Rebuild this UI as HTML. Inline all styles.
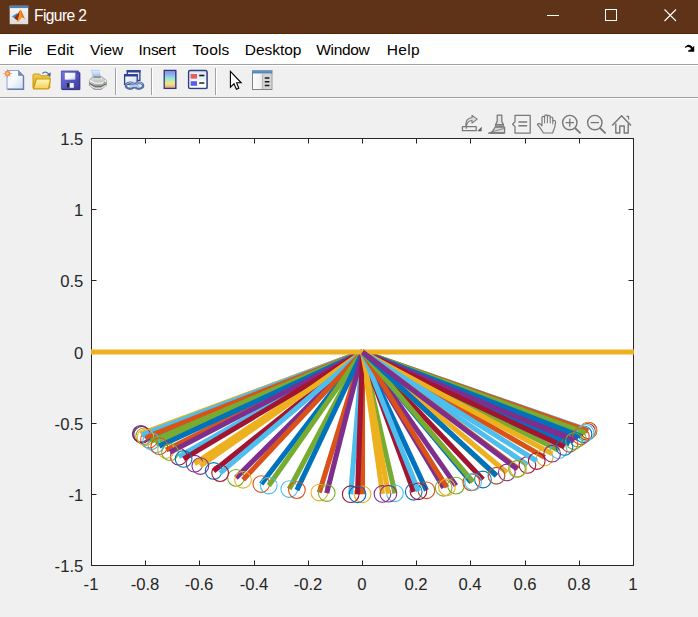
<!DOCTYPE html>
<html><head><meta charset="utf-8"><title>Figure 2</title>
<style>
html,body{margin:0;padding:0;}
body{width:698px;height:617px;overflow:hidden;background:#f0f0f0;font-family:"Liberation Sans",sans-serif;position:relative;}
#title{position:absolute;left:0;top:0;width:698px;height:33px;background:#5f3318;border-bottom:1px solid #552400;}
#title .t{position:absolute;left:34px;top:7px;color:#fff;font-size:15.6px;line-height:17px;letter-spacing:-0.6px;white-space:nowrap;}
#menu{position:absolute;left:0;top:34px;width:698px;height:30px;background:#fff;}
#menu span{position:absolute;top:6.6px;font-size:15.5px;line-height:17px;color:#000;white-space:nowrap;letter-spacing:-0.2px;}
#l1{position:absolute;left:0;top:64px;width:698px;height:1px;background:#a0a0a0;}
#l1b{position:absolute;left:0;top:65px;width:698px;height:1px;background:#fff;}
#l2{position:absolute;left:0;top:97px;width:698px;height:1px;background:#a0a0a0;}
#l2b{position:absolute;left:0;top:98px;width:698px;height:1px;background:#fff;}
svg{position:absolute;left:0;top:0;}
svg text{font-family:"Liberation Sans",sans-serif;font-size:16.67px;fill:#262626;}
</style></head><body>
<div id="title"><div class="t">Figure 2</div></div>
<div id="menu">
<span style="left:8px;letter-spacing:-0.2px">File</span><span style="left:46.6px;letter-spacing:0.2px">Edit</span><span style="left:90px;letter-spacing:0px">View</span><span style="left:138.6px;letter-spacing:-0.3px">Insert</span><span style="left:192.4px;letter-spacing:0.2px">Tools</span><span style="left:244.8px;letter-spacing:-0.05px">Desktop</span><span style="left:316.2px;letter-spacing:-0.3px">Window</span><span style="left:386.8px;letter-spacing:0.3px">Help</span>
</div>
<div id="l1"></div><div id="l1b"></div><div id="l2"></div><div id="l2b"></div>
<svg width="698" height="617" viewBox="0 0 698 617">
<rect x="91.5" y="138.5" width="542.0" height="427.0" fill="#fff" stroke="none"/>
<rect x="91.5" y="138.5" width="542.0" height="427.0" fill="none" stroke="#262626" stroke-width="1"/>
<path d="M91.5 565.5v-5M91.5 138.5v5" stroke="#262626" stroke-width="1" fill="none"/>
<path d="M145.5 565.5v-5M145.5 138.5v5" stroke="#262626" stroke-width="1" fill="none"/>
<path d="M199.5 565.5v-5M199.5 138.5v5" stroke="#262626" stroke-width="1" fill="none"/>
<path d="M254.5 565.5v-5M254.5 138.5v5" stroke="#262626" stroke-width="1" fill="none"/>
<path d="M308.5 565.5v-5M308.5 138.5v5" stroke="#262626" stroke-width="1" fill="none"/>
<path d="M362.5 565.5v-5M362.5 138.5v5" stroke="#262626" stroke-width="1" fill="none"/>
<path d="M416.5 565.5v-5M416.5 138.5v5" stroke="#262626" stroke-width="1" fill="none"/>
<path d="M470.5 565.5v-5M470.5 138.5v5" stroke="#262626" stroke-width="1" fill="none"/>
<path d="M525.5 565.5v-5M525.5 138.5v5" stroke="#262626" stroke-width="1" fill="none"/>
<path d="M579.5 565.5v-5M579.5 138.5v5" stroke="#262626" stroke-width="1" fill="none"/>
<path d="M633.5 565.5v-5M633.5 138.5v5" stroke="#262626" stroke-width="1" fill="none"/>
<path d="M91.5 138.5h5M633.5 138.5h-5" stroke="#262626" stroke-width="1" fill="none"/>
<path d="M91.5 209.5h5M633.5 209.5h-5" stroke="#262626" stroke-width="1" fill="none"/>
<path d="M91.5 280.5h5M633.5 280.5h-5" stroke="#262626" stroke-width="1" fill="none"/>
<path d="M91.5 352.5h5M633.5 352.5h-5" stroke="#262626" stroke-width="1" fill="none"/>
<path d="M91.5 423.5h5M633.5 423.5h-5" stroke="#262626" stroke-width="1" fill="none"/>
<path d="M91.5 494.5h5M633.5 494.5h-5" stroke="#262626" stroke-width="1" fill="none"/>
<path d="M91.5 565.5h5M633.5 565.5h-5" stroke="#262626" stroke-width="1" fill="none"/>
<g stroke-linecap="butt">
<line x1="362.50" y1="352.00" x2="362.50" y2="494.33" stroke="#D95319" stroke-width="5.1"/>
<circle cx="362.50" cy="494.33" r="8.33" fill="none" stroke="#EDB120" stroke-width="1.1"/>
<line x1="362.50" y1="352.00" x2="394.98" y2="493.31" stroke="#77AC30" stroke-width="5.1"/>
<circle cx="394.98" cy="493.31" r="8.33" fill="none" stroke="#4DBEEE" stroke-width="1.1"/>
<line x1="362.50" y1="352.00" x2="426.42" y2="490.32" stroke="#0072BD" stroke-width="5.1"/>
<circle cx="426.42" cy="490.32" r="8.33" fill="none" stroke="#D95319" stroke-width="1.1"/>
<line x1="362.50" y1="352.00" x2="455.97" y2="485.60" stroke="#7E2F8E" stroke-width="5.1"/>
<circle cx="455.97" cy="485.60" r="8.33" fill="none" stroke="#77AC30" stroke-width="1.1"/>
<line x1="362.50" y1="352.00" x2="482.94" y2="479.50" stroke="#A2142F" stroke-width="5.1"/>
<circle cx="482.94" cy="479.50" r="8.33" fill="none" stroke="#0072BD" stroke-width="1.1"/>
<line x1="362.50" y1="352.00" x2="506.84" y2="472.46" stroke="#EDB120" stroke-width="5.1"/>
<circle cx="506.84" cy="472.46" r="8.33" fill="none" stroke="#7E2F8E" stroke-width="1.1"/>
<line x1="362.50" y1="352.00" x2="527.43" y2="464.94" stroke="#4DBEEE" stroke-width="5.1"/>
<circle cx="527.43" cy="464.94" r="8.33" fill="none" stroke="#A2142F" stroke-width="1.1"/>
<line x1="362.50" y1="352.00" x2="544.65" y2="457.39" stroke="#D95319" stroke-width="5.1"/>
<circle cx="544.65" cy="457.39" r="8.33" fill="none" stroke="#EDB120" stroke-width="1.1"/>
<line x1="362.50" y1="352.00" x2="558.63" y2="450.22" stroke="#77AC30" stroke-width="5.1"/>
<circle cx="558.63" cy="450.22" r="8.33" fill="none" stroke="#4DBEEE" stroke-width="1.1"/>
<line x1="362.50" y1="352.00" x2="569.58" y2="443.81" stroke="#0072BD" stroke-width="5.1"/>
<circle cx="569.58" cy="443.81" r="8.33" fill="none" stroke="#D95319" stroke-width="1.1"/>
<line x1="362.50" y1="352.00" x2="577.79" y2="438.44" stroke="#7E2F8E" stroke-width="5.1"/>
<circle cx="577.79" cy="438.44" r="8.33" fill="none" stroke="#77AC30" stroke-width="1.1"/>
<line x1="362.50" y1="352.00" x2="583.54" y2="434.34" stroke="#A2142F" stroke-width="5.1"/>
<circle cx="583.54" cy="434.34" r="8.33" fill="none" stroke="#0072BD" stroke-width="1.1"/>
<line x1="362.50" y1="352.00" x2="587.07" y2="431.67" stroke="#EDB120" stroke-width="5.1"/>
<circle cx="587.07" cy="431.67" r="8.33" fill="none" stroke="#7E2F8E" stroke-width="1.1"/>
<line x1="362.50" y1="352.00" x2="588.54" y2="430.51" stroke="#4DBEEE" stroke-width="5.1"/>
<circle cx="588.54" cy="430.51" r="8.33" fill="none" stroke="#A2142F" stroke-width="1.1"/>
<line x1="362.50" y1="352.00" x2="588.03" y2="430.92" stroke="#D95319" stroke-width="5.1"/>
<circle cx="588.03" cy="430.92" r="8.33" fill="none" stroke="#EDB120" stroke-width="1.1"/>
<line x1="362.50" y1="352.00" x2="585.52" y2="432.86" stroke="#77AC30" stroke-width="5.1"/>
<circle cx="585.52" cy="432.86" r="8.33" fill="none" stroke="#4DBEEE" stroke-width="1.1"/>
<line x1="362.50" y1="352.00" x2="580.90" y2="436.27" stroke="#0072BD" stroke-width="5.1"/>
<circle cx="580.90" cy="436.27" r="8.33" fill="none" stroke="#D95319" stroke-width="1.1"/>
<line x1="362.50" y1="352.00" x2="573.96" y2="441.01" stroke="#7E2F8E" stroke-width="5.1"/>
<circle cx="573.96" cy="441.01" r="8.33" fill="none" stroke="#77AC30" stroke-width="1.1"/>
<line x1="362.50" y1="352.00" x2="564.47" y2="446.90" stroke="#A2142F" stroke-width="5.1"/>
<circle cx="564.47" cy="446.90" r="8.33" fill="none" stroke="#0072BD" stroke-width="1.1"/>
<line x1="362.50" y1="352.00" x2="552.14" y2="453.68" stroke="#EDB120" stroke-width="5.1"/>
<circle cx="552.14" cy="453.68" r="8.33" fill="none" stroke="#7E2F8E" stroke-width="1.1"/>
<line x1="362.50" y1="352.00" x2="536.74" y2="461.01" stroke="#4DBEEE" stroke-width="5.1"/>
<circle cx="536.74" cy="461.01" r="8.33" fill="none" stroke="#A2142F" stroke-width="1.1"/>
<line x1="362.50" y1="352.00" x2="518.12" y2="468.53" stroke="#D95319" stroke-width="5.1"/>
<circle cx="518.12" cy="468.53" r="8.33" fill="none" stroke="#EDB120" stroke-width="1.1"/>
<line x1="362.50" y1="352.00" x2="496.25" y2="475.79" stroke="#77AC30" stroke-width="5.1"/>
<circle cx="496.25" cy="475.79" r="8.33" fill="none" stroke="#4DBEEE" stroke-width="1.1"/>
<line x1="362.50" y1="352.00" x2="471.28" y2="482.36" stroke="#0072BD" stroke-width="5.1"/>
<circle cx="471.28" cy="482.36" r="8.33" fill="none" stroke="#D95319" stroke-width="1.1"/>
<line x1="362.50" y1="352.00" x2="443.58" y2="487.81" stroke="#7E2F8E" stroke-width="5.1"/>
<circle cx="443.58" cy="487.81" r="8.33" fill="none" stroke="#77AC30" stroke-width="1.1"/>
<line x1="362.50" y1="352.00" x2="413.73" y2="491.77" stroke="#A2142F" stroke-width="5.1"/>
<circle cx="413.73" cy="491.77" r="8.33" fill="none" stroke="#0072BD" stroke-width="1.1"/>
<line x1="362.50" y1="352.00" x2="382.47" y2="493.95" stroke="#EDB120" stroke-width="5.1"/>
<circle cx="382.47" cy="493.95" r="8.33" fill="none" stroke="#7E2F8E" stroke-width="1.1"/>
<line x1="362.50" y1="352.00" x2="350.70" y2="494.20" stroke="#4DBEEE" stroke-width="5.1"/>
<circle cx="350.70" cy="494.20" r="8.33" fill="none" stroke="#A2142F" stroke-width="1.1"/>
<line x1="362.50" y1="352.00" x2="319.33" y2="492.52" stroke="#D95319" stroke-width="5.1"/>
<circle cx="319.33" cy="492.52" r="8.33" fill="none" stroke="#EDB120" stroke-width="1.1"/>
<line x1="362.50" y1="352.00" x2="289.27" y2="489.04" stroke="#77AC30" stroke-width="5.1"/>
<circle cx="289.27" cy="489.04" r="8.33" fill="none" stroke="#4DBEEE" stroke-width="1.1"/>
<line x1="362.50" y1="352.00" x2="261.28" y2="484.03" stroke="#0072BD" stroke-width="5.1"/>
<circle cx="261.28" cy="484.03" r="8.33" fill="none" stroke="#D95319" stroke-width="1.1"/>
<line x1="362.50" y1="352.00" x2="235.95" y2="477.86" stroke="#7E2F8E" stroke-width="5.1"/>
<circle cx="235.95" cy="477.86" r="8.33" fill="none" stroke="#77AC30" stroke-width="1.1"/>
<line x1="362.50" y1="352.00" x2="213.67" y2="470.95" stroke="#A2142F" stroke-width="5.1"/>
<circle cx="213.67" cy="470.95" r="8.33" fill="none" stroke="#0072BD" stroke-width="1.1"/>
<line x1="362.50" y1="352.00" x2="194.62" y2="463.73" stroke="#EDB120" stroke-width="5.1"/>
<circle cx="194.62" cy="463.73" r="8.33" fill="none" stroke="#7E2F8E" stroke-width="1.1"/>
<line x1="362.50" y1="352.00" x2="178.80" y2="456.64" stroke="#4DBEEE" stroke-width="5.1"/>
<circle cx="178.80" cy="456.64" r="8.33" fill="none" stroke="#A2142F" stroke-width="1.1"/>
<line x1="362.50" y1="352.00" x2="166.07" y2="450.06" stroke="#D95319" stroke-width="5.1"/>
<circle cx="166.07" cy="450.06" r="8.33" fill="none" stroke="#EDB120" stroke-width="1.1"/>
<line x1="362.50" y1="352.00" x2="156.22" y2="444.31" stroke="#77AC30" stroke-width="5.1"/>
<circle cx="156.22" cy="444.31" r="8.33" fill="none" stroke="#4DBEEE" stroke-width="1.1"/>
<line x1="362.50" y1="352.00" x2="148.97" y2="439.64" stroke="#0072BD" stroke-width="5.1"/>
<circle cx="148.97" cy="439.64" r="8.33" fill="none" stroke="#D95319" stroke-width="1.1"/>
<line x1="362.50" y1="352.00" x2="144.09" y2="436.26" stroke="#7E2F8E" stroke-width="5.1"/>
<circle cx="144.09" cy="436.26" r="8.33" fill="none" stroke="#77AC30" stroke-width="1.1"/>
<line x1="362.50" y1="352.00" x2="141.39" y2="434.29" stroke="#A2142F" stroke-width="5.1"/>
<circle cx="141.39" cy="434.29" r="8.33" fill="none" stroke="#0072BD" stroke-width="1.1"/>
<line x1="362.50" y1="352.00" x2="140.74" y2="433.81" stroke="#EDB120" stroke-width="5.1"/>
<circle cx="140.74" cy="433.81" r="8.33" fill="none" stroke="#7E2F8E" stroke-width="1.1"/>
<line x1="362.50" y1="352.00" x2="142.10" y2="434.82" stroke="#4DBEEE" stroke-width="5.1"/>
<circle cx="142.10" cy="434.82" r="8.33" fill="none" stroke="#A2142F" stroke-width="1.1"/>
<line x1="362.50" y1="352.00" x2="145.54" y2="437.29" stroke="#D95319" stroke-width="5.1"/>
<circle cx="145.54" cy="437.29" r="8.33" fill="none" stroke="#EDB120" stroke-width="1.1"/>
<line x1="362.50" y1="352.00" x2="151.20" y2="441.12" stroke="#77AC30" stroke-width="5.1"/>
<circle cx="151.20" cy="441.12" r="8.33" fill="none" stroke="#4DBEEE" stroke-width="1.1"/>
<line x1="362.50" y1="352.00" x2="159.28" y2="446.16" stroke="#0072BD" stroke-width="5.1"/>
<circle cx="159.28" cy="446.16" r="8.33" fill="none" stroke="#D95319" stroke-width="1.1"/>
<line x1="362.50" y1="352.00" x2="170.01" y2="452.19" stroke="#7E2F8E" stroke-width="5.1"/>
<circle cx="170.01" cy="452.19" r="8.33" fill="none" stroke="#77AC30" stroke-width="1.1"/>
<line x1="362.50" y1="352.00" x2="183.62" y2="458.92" stroke="#A2142F" stroke-width="5.1"/>
<circle cx="183.62" cy="458.92" r="8.33" fill="none" stroke="#0072BD" stroke-width="1.1"/>
<line x1="362.50" y1="352.00" x2="200.31" y2="466.03" stroke="#EDB120" stroke-width="5.1"/>
<circle cx="200.31" cy="466.03" r="8.33" fill="none" stroke="#7E2F8E" stroke-width="1.1"/>
<line x1="362.50" y1="352.00" x2="220.14" y2="473.11" stroke="#4DBEEE" stroke-width="5.1"/>
<circle cx="220.14" cy="473.11" r="8.33" fill="none" stroke="#A2142F" stroke-width="1.1"/>
<line x1="362.50" y1="352.00" x2="243.05" y2="479.76" stroke="#D95319" stroke-width="5.1"/>
<circle cx="243.05" cy="479.76" r="8.33" fill="none" stroke="#EDB120" stroke-width="1.1"/>
<line x1="362.50" y1="352.00" x2="268.78" y2="485.55" stroke="#77AC30" stroke-width="5.1"/>
<circle cx="268.78" cy="485.55" r="8.33" fill="none" stroke="#4DBEEE" stroke-width="1.1"/>
<line x1="362.50" y1="352.00" x2="296.88" y2="490.10" stroke="#0072BD" stroke-width="5.1"/>
<circle cx="296.88" cy="490.10" r="8.33" fill="none" stroke="#D95319" stroke-width="1.1"/>
<line x1="362.50" y1="352.00" x2="326.72" y2="493.09" stroke="#7E2F8E" stroke-width="5.1"/>
<circle cx="326.72" cy="493.09" r="8.33" fill="none" stroke="#77AC30" stroke-width="1.1"/>
<line x1="362.50" y1="352.00" x2="357.51" y2="494.31" stroke="#A2142F" stroke-width="5.1"/>
<circle cx="357.51" cy="494.31" r="8.33" fill="none" stroke="#0072BD" stroke-width="1.1"/>
<line x1="362.50" y1="352.00" x2="388.37" y2="493.68" stroke="#EDB120" stroke-width="5.1"/>
<circle cx="388.37" cy="493.68" r="8.33" fill="none" stroke="#7E2F8E" stroke-width="1.1"/>
<line x1="362.50" y1="352.00" x2="418.44" y2="491.27" stroke="#4DBEEE" stroke-width="5.1"/>
<circle cx="418.44" cy="491.27" r="8.33" fill="none" stroke="#A2142F" stroke-width="1.1"/>
<line x1="362.50" y1="352.00" x2="446.91" y2="487.25" stroke="#D95319" stroke-width="5.1"/>
<circle cx="446.91" cy="487.25" r="8.33" fill="none" stroke="#EDB120" stroke-width="1.1"/>
<line x1="362.50" y1="352.00" x2="473.12" y2="481.94" stroke="#77AC30" stroke-width="5.1"/>
<circle cx="473.12" cy="481.94" r="8.33" fill="none" stroke="#4DBEEE" stroke-width="1.1"/>
<line x1="362.50" y1="352.00" x2="496.58" y2="475.69" stroke="#0072BD" stroke-width="5.1"/>
<circle cx="496.58" cy="475.69" r="8.33" fill="none" stroke="#D95319" stroke-width="1.1"/>
<line x1="91.0" y1="352.00" x2="634.0" y2="352.00" stroke="#EDB120" stroke-width="5.1"/>
<line x1="362.50" y1="352.00" x2="517.00" y2="468.94" stroke="#7E2F8E" stroke-width="5.1"/>
<circle cx="517.00" cy="468.94" r="8.33" fill="none" stroke="#77AC30" stroke-width="1.1"/>
</g>
<text x="91.0" y="590.2" text-anchor="middle">-1</text>
<text x="145.0" y="590.2" text-anchor="middle">-0.8</text>
<text x="199.0" y="590.2" text-anchor="middle">-0.6</text>
<text x="254.0" y="590.2" text-anchor="middle">-0.4</text>
<text x="308.0" y="590.2" text-anchor="middle">-0.2</text>
<text x="362.0" y="590.2" text-anchor="middle">0</text>
<text x="416.0" y="590.2" text-anchor="middle">0.2</text>
<text x="470.0" y="590.2" text-anchor="middle">0.4</text>
<text x="525.0" y="590.2" text-anchor="middle">0.6</text>
<text x="579.0" y="590.2" text-anchor="middle">0.8</text>
<text x="633.0" y="590.2" text-anchor="middle">1</text>
<text x="83.3" y="144.7" text-anchor="end">1.5</text>
<text x="83.3" y="215.7" text-anchor="end">1</text>
<text x="83.3" y="286.7" text-anchor="end">0.5</text>
<text x="83.3" y="358.7" text-anchor="end">0</text>
<text x="83.3" y="429.7" text-anchor="end">-0.5</text>
<text x="83.3" y="500.7" text-anchor="end">-1</text>
<text x="83.3" y="571.7" text-anchor="end">-1.5</text>
<defs>
<linearGradient id="gpage" x1="0" y1="0" x2="1" y2="1"><stop offset="0" stop-color="#ffffff"/><stop offset="0.5" stop-color="#f4f8ff"/><stop offset="1" stop-color="#c8d8f4"/></linearGradient>
<linearGradient id="gfold" x1="0" y1="0" x2="0" y2="1"><stop offset="0" stop-color="#fff8c0"/><stop offset="1" stop-color="#f4d050"/></linearGradient>
<linearGradient id="gfoldb" x1="0" y1="0" x2="0" y2="1"><stop offset="0" stop-color="#f0cc50"/><stop offset="1" stop-color="#d8a418"/></linearGradient>
<linearGradient id="gsave" x1="0" y1="0" x2="1" y2="1"><stop offset="0" stop-color="#7878e0"/><stop offset="0.6" stop-color="#5050c0"/><stop offset="1" stop-color="#3c3c98"/></linearGradient>
<linearGradient id="glabel" x1="0" y1="0" x2="1" y2="1"><stop offset="0" stop-color="#ffffff"/><stop offset="0.6" stop-color="#f4f4f8"/><stop offset="1" stop-color="#b8c4d8"/></linearGradient>
<linearGradient id="gcbar" x1="0" y1="0" x2="0" y2="1"><stop offset="0" stop-color="#9088e4"/><stop offset="0.2" stop-color="#90a8ec"/><stop offset="0.42" stop-color="#90e4e0"/><stop offset="0.6" stop-color="#d0e8a0"/><stop offset="0.75" stop-color="#f4e488"/><stop offset="1" stop-color="#f09878"/></linearGradient>
<linearGradient id="gleg" x1="0" y1="0" x2="0" y2="1"><stop offset="0" stop-color="#dfe6f4"/><stop offset="0.55" stop-color="#eef2fa"/><stop offset="0.6" stop-color="#ffffff"/><stop offset="1" stop-color="#ffffff"/></linearGradient>
<linearGradient id="gprt" x1="0" y1="0" x2="0" y2="1"><stop offset="0" stop-color="#e8e8e8"/><stop offset="1" stop-color="#888888"/></linearGradient>
<linearGradient id="gpap" x1="0" y1="0" x2="0" y2="1"><stop offset="0" stop-color="#e8f2ff"/><stop offset="1" stop-color="#90b8f0"/></linearGradient>
<linearGradient id="gpi" x1="0" y1="0" x2="1" y2="0"><stop offset="0" stop-color="#ffffff"/><stop offset="1" stop-color="#dcdcdc"/></linearGradient>
<linearGradient id="gpit" x1="0" y1="0" x2="0" y2="1"><stop offset="0" stop-color="#78a4cc"/><stop offset="1" stop-color="#4c7cac"/></linearGradient>
<linearGradient id="gwin" x1="0" y1="0" x2="1" y2="1"><stop offset="0" stop-color="#ffffff"/><stop offset="1" stop-color="#d4dcec"/></linearGradient>
<linearGradient id="gico" x1="0" y1="0" x2="0" y2="1"><stop offset="0" stop-color="#f8f8f8"/><stop offset="1" stop-color="#dcdcdc"/></linearGradient>
</defs>
<!-- title icon -->
<g>
<rect x="9.7" y="5.8" width="18.5" height="18.4" fill="url(#gico)"/>
<rect x="9.7" y="5.8" width="18.5" height="2.3" fill="#4c84b8"/>
<path d="M11.8 16.6 L17 13.2 L19.2 15.6 L16.2 19.2 Z" fill="#3f8acb"/>
<path d="M14.2 18 L17.2 14.6 L19 12 L20.4 10 L19.6 17 L17.6 20.4 L16 19.6Z" fill="#9c2a18"/>
<path d="M20.4 9.8 C21.6 9.8 22.6 14 25.2 19.4 C23.4 17.6 22.6 17 21.6 17.6 C20.4 18.4 19.4 21.6 17.2 21.8 C18.6 20 19.2 12.4 20.4 9.8Z" fill="#e8701c"/>
<path d="M20.4 9.8 C21 11 21.4 15 21.6 17.6 C20.4 18.4 19.4 21.6 17.2 21.8 C18.8 19.4 19.4 12.2 20.4 9.8Z" fill="#f4a020"/>
<path d="M16.4 20.4 L19 21.8 L17.2 22 Z" fill="#f0b020"/>
</g>
<!-- window controls -->
<g stroke="#fff" stroke-width="1" fill="none">
<path d="M547 15.5H559"/>
<rect x="605.5" y="9.5" width="11" height="11"/>
<path d="M664.5 9.5L676 21M676 9.5L664.5 21" stroke-width="1.1"/>
</g>
<!-- dock arrow -->
<g>
<path d="M694.2 45.6V51.8H688.2V50.4L691.6 49Z" fill="#000"/>
<path d="M685.2 47.5Q686.6 46.1 688.2 45.9" stroke="#000" stroke-width="1.1" fill="none"/>
<path d="M687.4 46.1Q689.6 45.4 691 47L693.4 50.4" stroke="#000" stroke-width="2.2" fill="none"/>
</g>
<!-- toolbar separators -->
<g>
<rect x="115" y="68" width="1" height="27" fill="#a0a0a0"/><rect x="116" y="68" width="1" height="27" fill="#fff"/>
<rect x="151" y="68" width="1" height="27" fill="#a0a0a0"/><rect x="152" y="68" width="1" height="27" fill="#fff"/>
<rect x="215" y="68" width="1" height="27" fill="#a0a0a0"/><rect x="216" y="68" width="1" height="27" fill="#fff"/>
</g>
<!-- new -->
<g>
<path d="M7 70.5H18.5L23.5 75.5V89.3H7Z" fill="url(#gpage)" stroke="#8ca4dc" stroke-width="1"/>
<path d="M23.5 75.5V89.3H7.6" fill="none" stroke="#6c7ca4" stroke-width="1.4"/>
<path d="M18.5 70.5V75.5H23.5Z" fill="#7c8cc0" stroke="#6c7ca4" stroke-width="0.6"/>
<circle cx="7.6" cy="73.6" r="2.7" fill="#f08c50"/>
<circle cx="7.4" cy="73.5" r="1.2" fill="#f8d060"/>
<path d="M7.6 69.6V77.6M3.6 73.6H11.6M4.8 70.8L10.4 76.4M10.4 70.8L4.8 76.4" stroke="#e87848" stroke-width="0.9" stroke-dasharray="1.2 5.6 1.2 0"/>
</g>
<!-- open -->
<g>
<path d="M33 75.2Q33 74 34.2 74H39.4L41.2 75.8H48.6Q49.8 75.8 49.8 77V88H33Z" fill="url(#gfoldb)" stroke="#c89a10" stroke-width="1"/>
<path d="M36.4 79H50.4L48.4 88.8H33.4Z" fill="url(#gfold)" stroke="#cc9c14" stroke-width="1.2" stroke-linejoin="round"/>
<path d="M42.4 73.6C44 71.4 47 71.6 48.8 74.2" fill="none" stroke="#5878a8" stroke-width="1.2"/>
<path d="M50.8 72.2L50.4 76.4L46.8 75Z" fill="#4868a0"/>
</g>
<!-- save -->
<g>
<path d="M61.4 71H78.2L79.6 72.4V89.2H61.4Z" fill="url(#gsave)" stroke="#4040a0" stroke-width="0.8"/>
<path d="M79.8 72.8V89.6H62" fill="none" stroke="#303078" stroke-width="1"/>
<rect x="64.8" y="72.8" width="10.5" height="6.9" fill="url(#glabel)"/>
<rect x="66.4" y="83" width="7.4" height="4.8" fill="#f0f0f4"/>
<rect x="66.4" y="83" width="3.2" height="4.8" fill="#202048"/>
<rect x="76.8" y="72.6" width="1.2" height="1.2" fill="#303078"/>
</g>
<!-- print -->
<g>
<path d="M91.6 70.4H98.8L100.6 77H93Z" fill="url(#gpap)" stroke="#a0b8e0" stroke-width="0.6"/>
<path d="M89.4 80L93 76.6H101.4L106.4 80.4V85.6L101 89.4H94.4L89.4 85.6Z" fill="url(#gprt)" stroke="#909090" stroke-width="0.8"/>
<path d="M89.6 80.4L95 83.2H101.4L106.2 80.6" fill="none" stroke="#f8f8f8" stroke-width="1.2"/>
<path d="M89.6 83.4L95 86.4H101.2L106.2 83.6" fill="none" stroke="#606060" stroke-width="0.9"/>
<path d="M90 85.6L95 88.2H101L106 85.6" fill="none" stroke="#f4f4f4" stroke-width="1"/>
<rect x="103.6" y="81.6" width="1.4" height="1.6" fill="#50c040"/>
<path d="M93.4 77.4H100.8" stroke="#707070" stroke-width="0.8"/>
</g>
<!-- link -->
<g>
<rect x="127.3" y="70.8" width="12.6" height="9.6" fill="url(#gwin)" stroke="#2c4490" stroke-width="1.3"/>
<rect x="126.7" y="70.1" width="13.8" height="2.4" fill="#2c4490"/>
<rect x="124.6" y="74.8" width="12.6" height="9.6" fill="url(#gwin)" stroke="#2c4490" stroke-width="1.3"/>
<rect x="124" y="74.1" width="13.8" height="2.4" fill="#2c4490"/>
<ellipse cx="130.2" cy="85.7" rx="4.3" ry="3" fill="none" stroke="#5470a8" stroke-width="2.5"/>
<ellipse cx="138.8" cy="85.7" rx="4.3" ry="3" fill="none" stroke="#5470a8" stroke-width="2.5"/>
<path d="M130.6 85.7H138.4" stroke="#b4c6e4" stroke-width="2.4" stroke-linecap="round"/>
<path d="M126.4 84.6A4.2 2.8 0 0 1 133.6 83.8M135.2 84.6A4.2 2.8 0 0 1 142.6 84" stroke="#a8bce0" stroke-width="1" fill="none"/>
</g>
<!-- colorbar -->
<g>
<rect x="164.7" y="70.8" width="11.6" height="18" fill="#7c88a8"/>
<rect x="164.2" y="70.4" width="11.6" height="18" fill="url(#gcbar)" stroke="#2c3c78" stroke-width="1.3"/>
</g>
<!-- legend -->
<g>
<rect x="189.2" y="71" width="18.6" height="18.2" rx="1.5" fill="#7c88a8"/>
<rect x="188.6" y="70.5" width="18.4" height="17.9" rx="1.5" fill="url(#gleg)" stroke="#2c4084" stroke-width="1.4"/>
<rect x="190.6" y="74" width="6.4" height="4.6" fill="#e85c5c"/>
<rect x="190.6" y="81.2" width="6.4" height="4.6" fill="#5c5ce8"/>
<rect x="199.2" y="74.7" width="5.2" height="1.6" fill="#181818"/>
<rect x="199.2" y="82.2" width="5.2" height="1.6" fill="#303030"/>
</g>
<!-- pointer -->
<g>
<path d="M230.4 71.4V87.2L234 83.8L236.4 89.2L238.8 88.2L236.6 82.8H241.2Z" fill="#fff" stroke="#000" stroke-width="1.1" stroke-linejoin="miter"/>
</g>
<!-- property inspector -->
<g>
<rect x="252.5" y="70.5" width="19.4" height="19" fill="url(#gpi)" stroke="#7c848c" stroke-width="1"/>
<rect x="262.6" y="73.6" width="8.8" height="15.4" fill="#d4d4d4"/>
<rect x="252.2" y="70" width="20" height="3.4" fill="url(#gpit)"/>
<path d="M262.4 73.6V89" stroke="#a8a8a8" stroke-width="0.8"/>
<path d="M264.8 78H269.4M264.8 81.8H269.4M264.8 85.5H269.4" stroke="#181818" stroke-width="1.5"/>
</g>
<!-- axes toolbar -->
<g fill="none" stroke="#787878" stroke-width="1.25" stroke-linejoin="round" stroke-linecap="butt">
<!-- export -->
<rect x="462.4" y="126.7" width="13.8" height="4"/>
<path d="M466.2 128.4C466.2 123.2 467.8 120.6 472 120.4V123.2L477.2 119.2L472 115.4V117.8C466.6 118 464.8 122.6 466.2 128.4Z" stroke-width="1.05" fill="#dedede"/>
<path d="M477.2 131.2H481.6V126.8Z" fill="#606060" stroke="none"/>
<!-- brush -->
<path d="M497.2 115.2H501.8V121.4L503.4 124.6H495.6L497.2 121.4Z" fill="#e4e4e4"/>
<path d="M495.4 125H503.6V126.6H495.4Z" stroke-width="0.9" fill="#bcbcbc"/>
<path d="M495.2 127L492.4 131.6Q490.6 133 488.6 133.2H504.6V127Z" fill="#d8d8d8"/>
<path d="M493 131.6L504 128.4" stroke-width="0.8"/>
<path d="M490 133H504.4" stroke-width="1.6"/>
<!-- datatip -->
<path d="M515 115.4H530.2V133H515V126.6L512.6 124.2L515 121.8Z" />
<path d="M518.4 122H527.2M518.4 125.8H527.2" stroke-width="1.4"/>
<!-- hand -->
<path d="M543.4 133C541.6 130 539.4 126.6 537.4 124.6C538.2 123 540.2 123.4 542 125.8V117.8C542 116 544.6 116 544.6 117.8V116.2C544.6 114.4 547.4 114.4 547.4 116.2V116.8C547.4 115 550.2 115 550.2 116.8V118.2C550.2 116.6 552.8 116.6 552.8 118.2V121.4C553.6 120 555.8 120.2 555.6 122.2C555.4 126 554.4 129 552.6 133Z" stroke-width="1.2"/>
<path d="M544.6 118V123.4M547.4 117V123.2M550.2 118.4V123.4M552.8 121.4V124.4" stroke-width="1"/>
<!-- zoom in -->
<circle cx="569.8" cy="122.6" r="7.2" stroke-width="1.4"/>
<path d="M575 128L580.6 133.4" stroke-width="1.8"/>
<path d="M565.6 122.6H574M569.8 118.4V126.8" stroke-width="1.3"/>
<!-- zoom out -->
<circle cx="594.8" cy="122.6" r="7.2" stroke-width="1.4"/>
<path d="M600 128L605.6 133.4" stroke-width="1.8"/>
<path d="M590.6 122.6H599" stroke-width="1.3"/>
<!-- home -->
<path d="M612.2 125.6L621.6 115.8L631 125.6" stroke-width="1.5"/>
<path d="M615.8 123.4V133H619.8V126H624.2V133H628.2V123.4" stroke-width="1.4"/>
<path d="M626.4 116.4H628.6V119.4" stroke-width="1.2"/>
</g>

</svg>
</body></html>
